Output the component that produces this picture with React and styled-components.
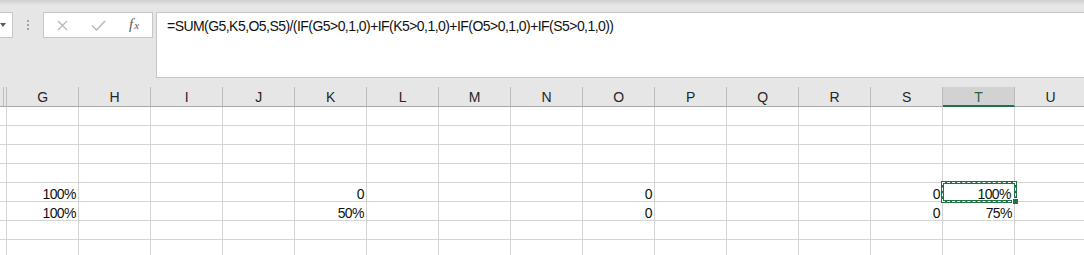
import React from 'react';
import styled, { createGlobalStyle } from 'styled-components';

const GlobalStyle = createGlobalStyle`
  html, body {
    margin: 0;
    padding: 0;
    background: #fff;
    overflow: hidden;
  }
  body {
    font-family: 'Liberation Sans', Arial, sans-serif;
  }
`;

const COLUMNS = ['G', 'H', 'I', 'J', 'K', 'L', 'M', 'N', 'O', 'P', 'Q', 'R', 'S', 'T', 'U'];
const SELECTED_COL = 'T';
const SELECTED_ROW = 5;

const ROWS = [
  { id: 1 },
  { id: 2 },
  { id: 3 },
  { id: 4 },
  { id: 5, values: { G: '100%', K: '0', O: '0', S: '0', T: '100%' } },
  { id: 6, values: { G: '100%', K: '50%', O: '0', S: '0', T: '75%' } },
  { id: 7 },
  { id: 8 },
];

const FORMULA = '=SUM(G5,K5,O5,S5)/(IF(G5>0,1,0)+IF(K5>0,1,0)+IF(O5>0,1,0)+IF(S5>0,1,0))';

const App = () => {
  return (
    <Page>
      <GlobalStyle />
      <FormulaBar>
        <NameBox>
          <DropArrow />
        </NameBox>
        <Grip>
          <Dot />
          <Dot />
          <Dot />
        </Grip>
        <FuncButtons>
          <IconSlot>
            <svg width="11" height="11" viewBox="0 0 11 11">
              <path d="M1 1 L10 10 M10 1 L1 10" stroke="#b9b9b9" strokeWidth="1.4" fill="none" />
            </svg>
          </IconSlot>
          <IconSlot>
            <svg width="15" height="11" viewBox="0 0 15 11">
              <path d="M1 5.5 L5.5 10 L14 1" stroke="#b9b9b9" strokeWidth="1.5" fill="none" />
            </svg>
          </IconSlot>
          <IconSlot>
            <Fx>
              f<small>x</small>
            </Fx>
          </IconSlot>
        </FuncButtons>
        <FormulaInput>{FORMULA}</FormulaInput>
      </FormulaBar>

      <Grid>
        <HeaderCell stub>
          <StubMark />
        </HeaderCell>
        {COLUMNS.map((c) => (
          <HeaderCell key={c} selected={c === SELECTED_COL}>
            {c}
          </HeaderCell>
        ))}

        {ROWS.map((row) => (
          <React.Fragment key={row.id}>
            <Cell stub />
            {COLUMNS.map((c) => {
              const active = row.id === SELECTED_ROW && c === SELECTED_COL;
              return (
                <Cell key={c} active={active}>
                  {row.values && row.values[c]}
                  {active && (
                    <Marquee>
                      <Ants />
                      <FillHandle />
                    </Marquee>
                  )}
                </Cell>
              );
            })}
          </React.Fragment>
        ))}
      </Grid>
    </Page>
  );
};

export default App;

const Page = styled.div`
  width: 1084px;
  height: 255px;
  overflow: hidden;
  background: #fff;
`;

const FormulaBar = styled.div`
  height: 87px;
  box-sizing: border-box;
  padding-top: 12px;
  display: flex;
  align-items: flex-start;
  background: linear-gradient(#cfcfcf 0px, #e6e6e6 5px, #e6e6e6 100%);
`;

const NameBox = styled.div`
  width: 13px;
  height: 26px;
  box-sizing: border-box;
  border: 1px solid #c6c6c6;
  border-left: none;
  background: #fff;
  position: relative;
`;

const DropArrow = styled.span`
  position: absolute;
  left: 0;
  top: 10px;
  width: 0;
  height: 0;
  border-left: 3.5px solid transparent;
  border-right: 3.5px solid transparent;
  border-top: 4px solid #5a5a5a;
`;

const Grip = styled.div`
  width: 30px;
  padding-top: 8px;
  display: flex;
  flex-direction: column;
  align-items: center;
  gap: 2px;
`;

const Dot = styled.span`
  width: 2px;
  height: 2px;
  background: #a3a3a3;
`;

const FuncButtons = styled.div`
  width: 110px;
  height: 26px;
  box-sizing: border-box;
  border: 1px solid #c6c6c6;
  background: #fff;
  display: flex;
  align-items: center;
`;

const IconSlot = styled.div`
  width: 36px;
  height: 24px;
  display: flex;
  align-items: center;
  justify-content: center;
`;

const Fx = styled.span`
  font-family: 'Liberation Serif', 'Times New Roman', serif;
  font-style: italic;
  font-size: 15px;
  color: #5b5b5b;
  line-height: 1;
  margin-top: -1px;

  small {
    font-size: 11px;
    margin-left: 1px;
  }
`;

const FormulaInput = styled.div`
  flex: 1;
  margin-left: 3px;
  margin-right: -10px;
  height: 66px;
  box-sizing: border-box;
  border: 1px solid #c6c6c6;
  background: #fff;
  padding: 5px 10px 0 10px;
  font-size: 14px;
  line-height: 16px;
  letter-spacing: -0.55px;
  color: #111;
  white-space: nowrap;
`;

const Grid = styled.div`
  display: grid;
  grid-template-columns: 7px repeat(${COLUMNS.length}, 72px);
  grid-auto-rows: 19px;
  grid-template-rows: 20px;
`;

const HeaderCell = styled.div`
  position: relative;
  box-sizing: border-box;
  height: 20px;
  background: ${({ selected }) => (selected ? '#d2d2d2' : '#e6e6e6')};
  border-right: 1px solid #bcbcbc;
  border-bottom: ${({ selected }) => (selected ? '2px solid #217346' : '1px solid #a8a8a8')};
  display: flex;
  align-items: center;
  justify-content: center;
  padding-top: ${({ selected }) => (selected ? '2px' : '1px')};
  font-size: 14px;
  letter-spacing: -0.3px;
  color: ${({ selected }) => (selected ? '#2d5f3e' : '#262626')};
`;

const StubMark = styled.span`
  position: absolute;
  left: 3px;
  top: 0;
  bottom: 0;
  width: 1px;
  background: #bcbcbc;
`;

const Cell = styled.div`
  position: relative;
  box-sizing: border-box;
  height: 19px;
  border-right: 1px solid #d4d4d4;
  border-bottom: 1px solid #d4d4d4;
  display: flex;
  align-items: flex-end;
  justify-content: flex-end;
  padding-right: ${({ active }) => (active ? '3px' : '2px')};
  font-size: 14px;
  line-height: 14px;
  letter-spacing: -0.55px;
  color: #111;
  white-space: nowrap;
  z-index: ${({ active }) => (active ? 2 : 'auto')};
`;

const Marquee = styled.div`
  position: absolute;
  left: -2px;
  top: -2px;
  width: 76px;
  height: 22px;
  box-sizing: border-box;
  border: 3px solid #217346;
  pointer-events: none;
`;

const Ants = styled.div`
  position: absolute;
  top: -2px;
  left: -2px;
  right: -2px;
  bottom: -2px;
  border: 1px dashed #fff;
`;

const FillHandle = styled.div`
  position: absolute;
  right: -4px;
  bottom: -4px;
  width: 5px;
  height: 5px;
  background: #217346;
  border: 1px solid #fff;
  border-right: none;
  border-bottom: none;
`;
